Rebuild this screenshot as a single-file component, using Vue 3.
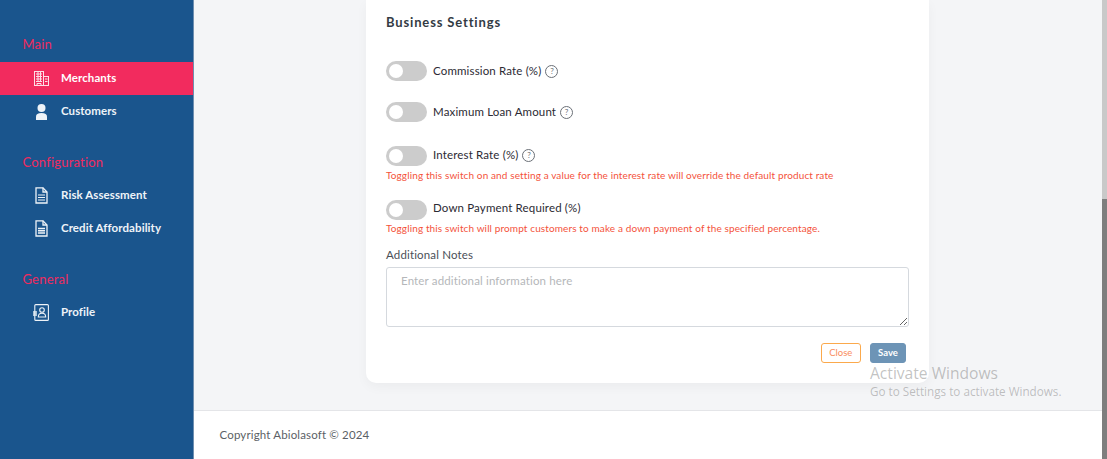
<script setup>
const navGroups = [
  { title: 'Main', items: [
    { label: 'Merchants', icon: 'building', active: true },
    { label: 'Customers', icon: 'person' },
  ] },
  { title: 'Configuration', items: [
    { label: 'Risk Assessment', icon: 'doc' },
    { label: 'Credit Affordability', icon: 'doc2' },
  ] },
  { title: 'General', items: [
    { label: 'Profile', icon: 'contact' },
  ] },
]
const toggles = [
  { label: 'Commission Rate (%)', help: true, cls: 't1' },
  { label: 'Maximum Loan Amount', help: true, cls: 't2' },
  { label: 'Interest Rate (%)', help: true, cls: 't3', note: 'Toggling this switch on and setting a value for the interest rate will override the default product rate' },
  { label: 'Down Payment Required (%)', cls: 't4', note: 'Toggling this switch will prompt customers to make a down payment of the specified percentage.' },
]
</script>

<template>
  <div class="app">
    <aside class="sidebar">
      <div v-for="g in navGroups" :key="g.title" class="group">
        <div class="group-title">{{ g.title }}</div>
        <a v-for="it in g.items" :key="it.label" class="nav-item" :class="{ active: it.active }">
          <span class="nav-icon">
            <svg v-if="it.icon === 'building'" width="15" height="15" viewBox="0 0 15 15" fill="none" stroke="currentColor" stroke-width="1" opacity="0.85">
              <rect x="0.5" y="0.5" width="9" height="14" />
              <rect x="9.500" y="5.500" width="5" height="9" />
              <path d="M2 3h6M2 5.500h6M2 8h6M2 10.500h6M4 1v10M6.500 1v10M11 8h2.500M11 10.500h2.500M3 14.500v-2h4v2" />
            </svg>
            <svg v-else-if="it.icon === 'person'" width="11" height="16" viewBox="0 0 11 16" fill="currentColor">
              <circle cx="5.500" cy="4" r="4" />
              <path d="M0 16v-3.500C0 10.500 1.800 9 5.500 9S11 10.500 11 12.500V16z" />
            </svg>
            <svg v-else-if="it.icon === 'doc'" width="13" height="17" viewBox="0 0 13 17" fill="none" stroke="currentColor" stroke-width="1.300">
              <path d="M1 .8h7l4 4.200v11H1z" />
              <path d="M8 .8V5h4" />
              <path d="M3 8h7M3 10.500h7M3 13h7" stroke-width="1.100" />
            </svg>
            <svg v-else-if="it.icon === 'doc2'" width="13" height="17" viewBox="0 0 13 17" fill="none" stroke="currentColor" stroke-width="1.300">
              <path d="M1 .8h7l4 4.200v11H1z" />
              <path d="M8 .8V5h4" />
              <path d="M3 8.500h7M3 10.800h7M3 13h7" stroke-width="1.500" />
            </svg>
            <svg v-else width="16" height="17" viewBox="0 0 16 17" fill="none" stroke="currentColor" stroke-width="1.100">
              <rect x="1.800" y="0.600" width="13.600" height="15.800" rx="1" />
              <circle cx="9" cy="6" r="2.300" />
              <path d="M5.300 13c0-2.600 1.500-3.800 3.700-3.800s3.700 1.200 3.700 3.800z" />
              <rect x="0" y="7" width="4" height="5" fill="currentColor" stroke="none" opacity="0.7" />
            </svg>
          </span>
          <span class="nav-label">{{ it.label }}</span>
        </a>
      </div>
    </aside>

    <div class="main">
      <div class="content">
        <section class="card">
          <h2 class="card-title">Business Settings</h2>
          <div v-for="t in toggles" :key="t.label" class="toggle-block" :class="t.cls">
            <div class="toggle-row">
              <span class="switch"><span class="knob"></span></span>
              <span class="toggle-label">{{ t.label }}</span>
              <span v-if="t.help" class="help">?</span>
            </div>
            <p v-if="t.note" class="note">{{ t.note }}</p>
          </div>
          <label class="notes-label" for="notes">Additional Notes</label>
          <textarea id="notes" class="notes" placeholder="Enter additional information here"></textarea>
          <div class="actions">
            <button class="btn close">Close</button>
            <button class="btn save">Save</button>
          </div>
        </section>
        <div class="watermark">
          <div class="wm-title">Activate Windows</div>
          <div class="wm-sub">Go to Settings to activate Windows.</div>
        </div>
      </div>
      <footer class="footer">Copyright Abiolasoft © 2024</footer>
    </div>

    <div class="scrollbar"><div class="thumb"></div></div>
  </div>
</template>

<style>
html, body { margin: 0; overflow: hidden; }
</style>

<style scoped>
.app {
  display: flex;
  height: 459px;
  width: 1107px;
  overflow: hidden;
  position: relative;
  font-family: "Lato", "Noto Sans", sans-serif;
  background: #f4f5f7;
}
.sidebar {
  width: 194px;
  flex: none;
  background: #1a558d;
  padding-top: 36px;
  box-sizing: border-box;
  border-right: 1px solid #6f8fb0;
}
.group { margin-bottom: 25.500px; }
.group + .group { margin-bottom: 26.500px; }
.group-title {
  color: #ef2b5f;
  font-size: 13px;
  line-height: 16px;
  margin: 0 0 10px 22.500px;
  letter-spacing: 0.2px;
}
.group + .group .group-title { margin-bottom: 9px; }
.nav-item {
  display: flex;
  align-items: center;
  height: 33px;
  color: #eef3f8;
  font-size: 11.500px;
  font-weight: 700;
}
.nav-item.active { background: #f22b5e; color: #fff; }
.nav-icon {
  width: 16px;
  margin-left: 33px;
  margin-right: 12px;
  display: flex;
  justify-content: center;
}
.nav-label {
  padding-bottom: 2px;
  letter-spacing: 0.08px;
}
.main {
  flex: 1;
  display: flex;
  flex-direction: column;
  min-width: 0;
}
.content {
  flex: 1;
  position: relative;
  display: flex;
  justify-content: center;
  padding-right: 5px;
}
.card {
  width: 563px;
  height: 383px;
  margin-left: -1px;
  box-sizing: border-box;
  background: #fff;
  border-radius: 0 0 10px 10px;
  box-shadow: 0 4px 12px rgba(0, 0, 0, 0.04);
  padding: 14px 20px 0;
  display: flex;
  flex-direction: column;
}
.card-title {
  margin: 0 0 31px;
  font-size: 13px;
  line-height: 16px;
  font-weight: 700;
  color: #333b44;
  letter-spacing: 0.85px;
}
.toggle-row {
  display: flex;
  align-items: center;
  height: 20px;
}
.t1 { margin-bottom: 21px; }
.t2 { margin-bottom: 24px; }
.t3 { margin-bottom: 19px; }
.t4 { margin-bottom: 14px; }
.switch {
  width: 41px;
  height: 20px;
  background: #cccccc;
  border-radius: 10px;
  position: relative;
  flex: none;
}
.knob {
  position: absolute;
  left: 3px;
  top: 3px;
  width: 14px;
  height: 14px;
  background: #fff;
  border-radius: 50%;
}
.toggle-label {
  margin-left: 6px;
  padding-bottom: 2px;
  font-size: 11.500px;
  color: #2c2a33;
  letter-spacing: 0.15px;
}
.t3 .toggle-label { padding-bottom: 4px; }
.t4 .toggle-label { padding-bottom: 6px; }
.help {
  width: 11px;
  height: 11px;
  margin-left: 4px;
  border: 1px solid #6b7077;
  border-radius: 50%;
  color: #6b7077;
  font-size: 8px;
  line-height: 11px;
  text-align: center;
}
.t3 .help { margin-bottom: 1px; }
.note {
  margin: 3px 0 0;
  font-size: 10px;
  line-height: 12px;
  color: #f4523b;
  letter-spacing: 0.12px;
}
.t4 .note { margin-top: 2px; }
.notes-label {
  font-size: 11.500px;
  line-height: 14px;
  color: #4a4f57;
  margin-bottom: 5px;
  letter-spacing: 0.15px;
}
.notes {
  display: block;
  width: 523px;
  height: 60px;
  box-sizing: border-box;
  border: 1px solid #d5d9de;
  border-radius: 3px;
  padding: 6px 14px;
  font-family: inherit;
  font-size: 11.500px;
  letter-spacing: 0.15px;
  outline: none;
}
.notes::placeholder { color: #b5b7ba; }
.actions {
  display: flex;
  justify-content: flex-end;
  gap: 9.500px;
  margin-top: 16px;
  padding-right: 3px;
}
.btn {
  height: 20px;
  padding: 0 0 1px;
  border-radius: 3px;
  font-family: inherit;
  font-size: 9.500px;
  box-sizing: border-box;
}
.close {
  width: 39.500px;
  background: #fff;
  border: 1px solid #fba94c;
  color: #f98c5d;
}
.save {
  width: 36px;
  background: #6d94b6;
  border: 1px solid #6d94b6;
  color: #fff;
  font-weight: 700;
}
.watermark {
  position: absolute;
  left: 676px;
  top: 363px;
  pointer-events: none;
}
.wm-title {
  font-family: "Open Sans", sans-serif;
  font-size: 15.600px;
  line-height: 20px;
  color: rgba(120, 120, 120, 0.45);
}
.wm-sub {
  font-family: "Open Sans", sans-serif;
  font-size: 11.700px;
  line-height: 17px;
  color: rgba(120, 120, 120, 0.45);
}
.footer {
  height: 49px;
  flex: none;
  background: #fff;
  border-top: 1px solid #e4e5e8;
  box-sizing: border-box;
  padding: 0 0 2px 25.500px;
  display: flex;
  align-items: center;
  font-size: 11.500px;
  color: #5b5f66;
  letter-spacing: 0.15px;
}
.scrollbar {
  position: absolute;
  right: 0;
  top: 0;
  bottom: 0;
  width: 5px;
  background: #c9c9c9;
}
.thumb {
  position: absolute;
  top: 199px;
  bottom: 0;
  left: 0;
  right: 0;
  background: #7e7e7e;
}
</style>
